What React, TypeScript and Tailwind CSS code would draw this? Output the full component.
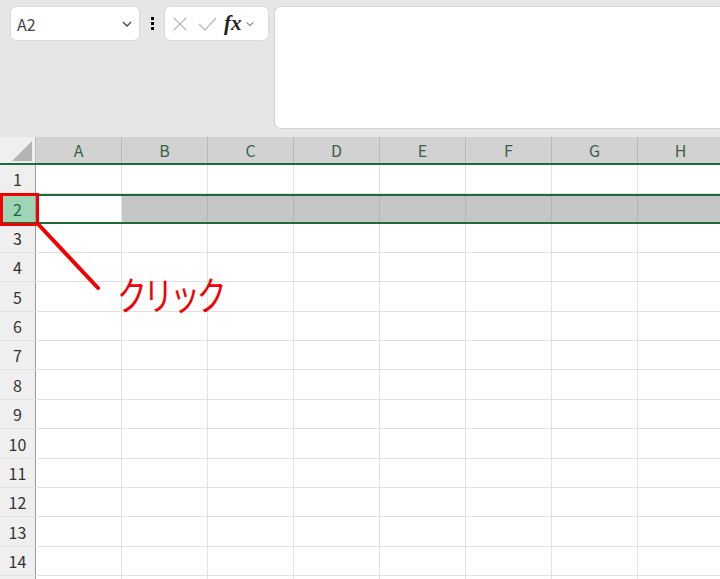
import React from "react";

const COLS = ["A", "B", "C", "D", "E", "F", "G", "H"];
const ROW_H = [29, 30, 29, 29, 30, 29, 29, 30, 29, 30, 29, 29, 30, 29, 29];

const font = { fontFamily: '"Noto Sans CJK JP", "Noto Sans", sans-serif' };

export default function App() {
  return (
    <div className="relative w-[720px] h-[579px] overflow-hidden bg-white" style={font}>
      {/* formula bar area */}
      <div className="h-[137px] bg-[#e6e6e6] flex items-start pt-[7px] pl-[11px]">
        <div className="w-[128px] shrink-0 h-[33px] bg-white rounded-[5px] flex items-center justify-between pl-[6px] pr-[6px] shadow-[0_0_0_1px_#dadada]">
          <span className="text-[16px] text-[#444] leading-none">A2</span>
          <Chevron className="w-[12px] h-[12px] text-[#444]" />
        </div>
        <div className="w-[26px] shrink-0 h-[33px] flex flex-col items-center justify-center gap-[2px]">
          <span className="w-[3px] h-[3px] bg-black" />
          <span className="w-[3px] h-[3px] bg-black" />
          <span className="w-[3px] h-[3px] bg-black" />
        </div>
        <div className="w-[103px] shrink-0 h-[33px] bg-white rounded-[5px] flex items-center pl-[6px] shadow-[0_0_0_1px_#dadada]">
          <svg viewBox="0 0 20 20" className="w-[18px] h-[18px]">
            <path d="M3 3 L17 17 M17 3 L3 17" stroke="#bdbdbd" strokeWidth="1.5" fill="none" />
          </svg>
          <svg viewBox="0 0 20 20" className="w-[22px] h-[20px] ml-[7px]">
            <path d="M2 10 L8 16 L19 4" stroke="#bdbdbd" strokeWidth="1.5" fill="none" />
          </svg>
          <span
            className="ml-[6px] text-[21px] italic font-bold leading-none text-[#222]"
            style={{ fontFamily: '"Liberation Serif", "DejaVu Serif", serif' }}
          >
            fx
          </span>
          <Chevron className="w-[10px] h-[10px] ml-[3px] text-[#888]" />
        </div>
        <div className="ml-[7px] flex-1 h-[121px] bg-white rounded-l-[6px] shadow-[0_0_0_1px_#d4d4d4]" />
      </div>

      {/* column headers */}
      <div className="flex h-[28px] border-b-2 border-[#1e6b3a]">
        <div className="w-[36px] shrink-0 bg-[#efefef] border-r border-[#bdbdbd] relative">
          <svg viewBox="0 0 20 20" className="absolute right-[3px] bottom-[2px] w-[20px] h-[20px]">
            <path d="M20 0 L20 20 L0 20 Z" fill="#b4b4b4" />
          </svg>
        </div>
        {COLS.map((c) => (
          <div
            key={c}
            className="w-[86px] shrink-0 bg-[#d2d2d2] border-r border-[#b8b8b8] flex items-center justify-center text-[16px] text-[#3d6048]"
          >
            {c}
          </div>
        ))}
      </div>

      {/* rows */}
      {ROW_H.map((h, i) => {
        const n = i + 1;
        const sel = n === 2;
        return (
          <div
            key={n}
            className={`flex ${sel ? "border-y-2 border-[#1e6b3a]" : "border-b border-[#e1e1e1]"}`}
            style={{ height: h }}
          >
            <div
              className={`w-[36px] shrink-0 border-r border-[#9c9c9c] flex items-center justify-center text-[16px] ${
                sel ? "bg-[#9fd5b7] text-[#1e6b3a]" : "bg-[#efefef] text-[#333]"
              }`}
            >
              {n <= 14 ? n : ""}
            </div>
            {COLS.map((c, j) => (
              <div
                key={c}
                className={`w-[86px] shrink-0 border-r ${
                  sel && j > 0 ? "bg-[#c6c6c6] border-[#b4b4b4]" : "bg-white border-[#e1e1e1]"
                }`}
              />
            ))}
          </div>
        );
      })}

      {/* annotation */}
      <div className="absolute left-0 top-[193px] w-[39px] h-[33px] border-[3px] border-[#f20000]" />
      <svg className="absolute left-0 top-0 w-[720px] h-[579px] pointer-events-none" viewBox="0 0 720 579">
        <path d="M38 224 L98 288" stroke="#f20000" strokeWidth="4" strokeLinecap="round" />
      </svg>
      <div className="absolute left-[117px] top-[274px] text-[39px] leading-none text-[#f20000] tracking-[-4px] scale-x-[0.76] origin-left">
        クリック
      </div>
    </div>
  );
}

function Chevron({ className }: { className?: string }) {
  return (
    <svg viewBox="0 0 12 12" className={className}>
      <path d="M2 4 L6 8 L10 4" stroke="currentColor" strokeWidth="1.3" fill="none" />
    </svg>
  );
}
